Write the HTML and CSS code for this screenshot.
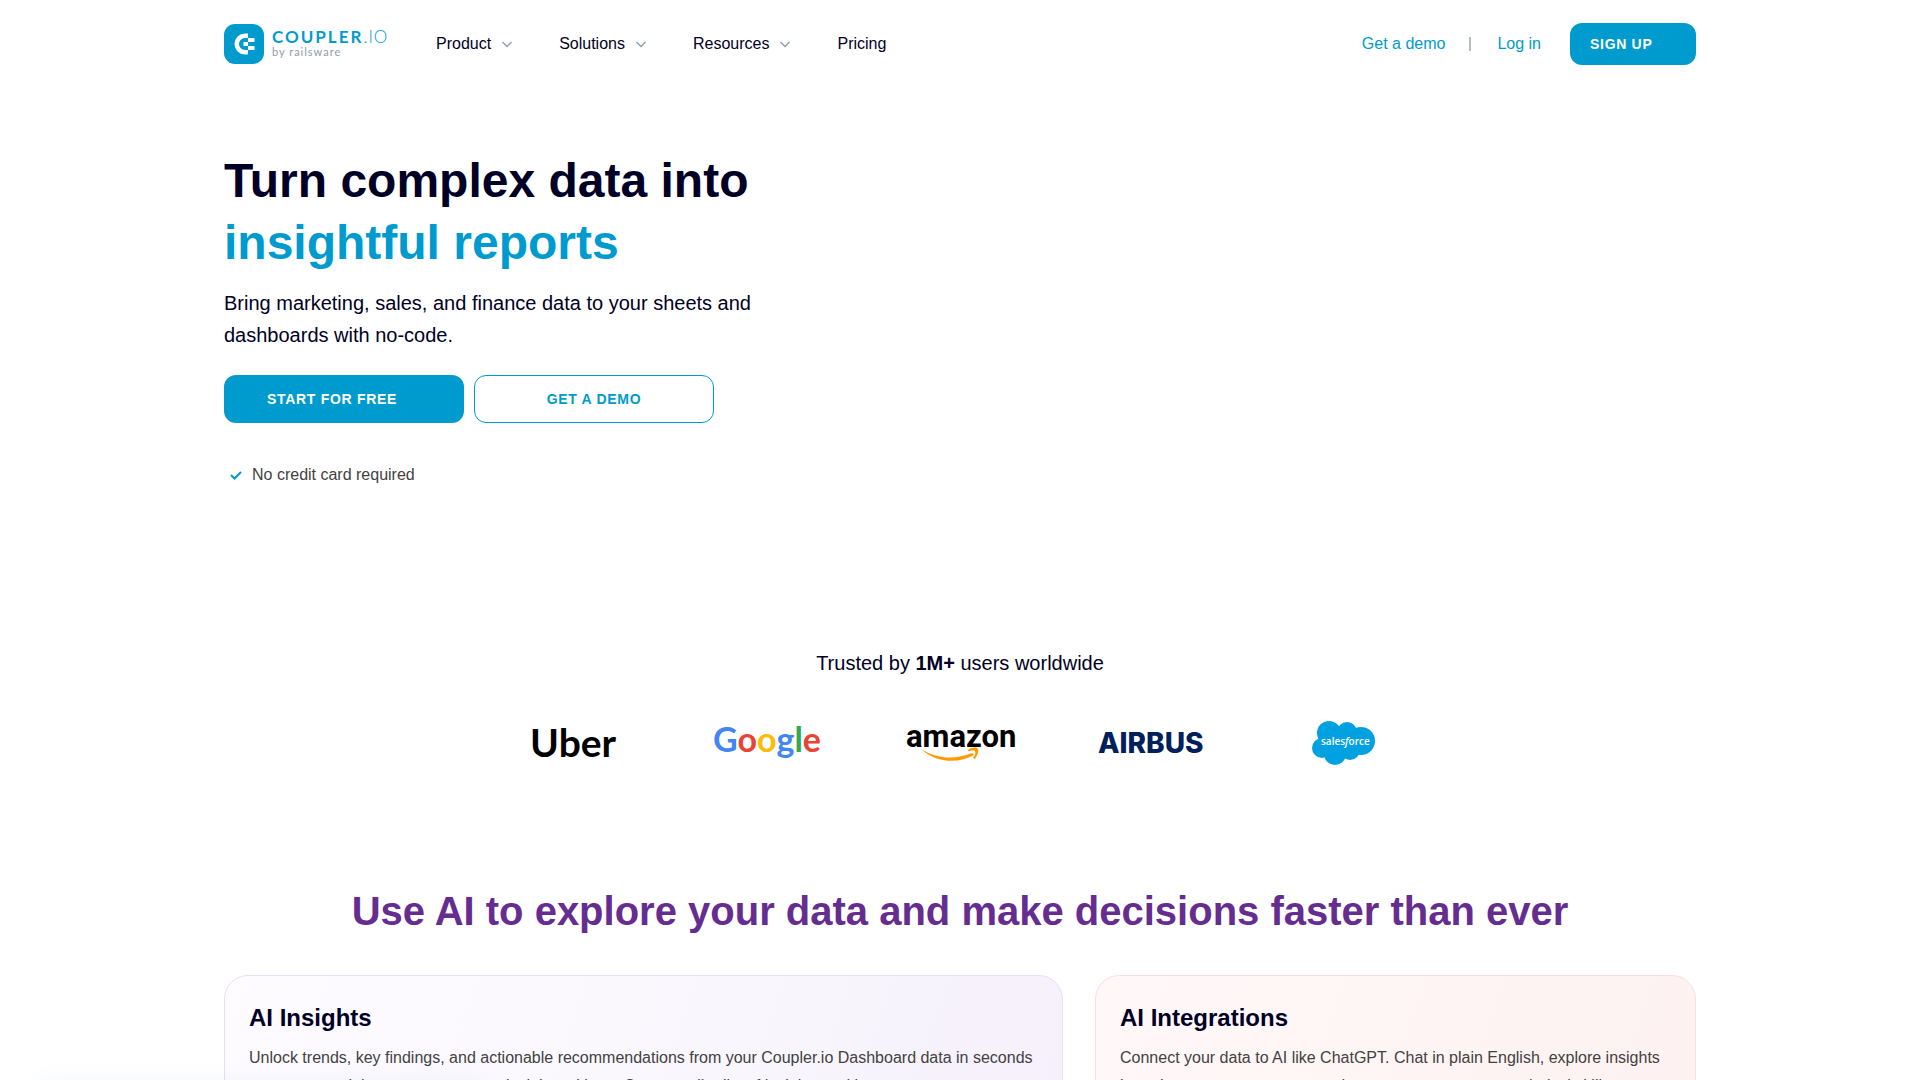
FILE: index.html
```html
<!DOCTYPE html>
<html lang="en">
<head>
  <meta charset="UTF-8">
  <meta name="viewport" content="width=device-width, initial-scale=1">
  <title>Coupler.io</title>
  <link rel="stylesheet" href="styles.css">
</head>
<body>

  <header class="header container">
    <a href="#" class="logo">
      <svg class="logo-icon" viewBox="0 0 40 40" aria-hidden="true">
        <rect width="40" height="40" rx="11" fill="#009bce"/>
        <path d="M24 9.500h-3a10.500 10.500 0 0 0 0 21h3v-4.500h-3a6 6 0 0 1 0-12h3z" fill="#fff"/>
        <path d="M24 14h6.500v4H24zM24 22h6.500v4H24zM24 18v4h-4.500v-4z" fill="#fff"/>
      </svg>
      <span class="logo-text">
        <span class="logo-name">COUPLER<span class="logo-light">.IO</span></span>
        <span class="logo-by">by railsware</span>
      </span>
    </a>

    <nav class="nav">
      <a href="#">Product
        <svg class="chevron" viewBox="0 0 12 12"><path d="M1.500 4l4.500 4.500L10.500 4"/></svg>
      </a>
      <a href="#">Solutions
        <svg class="chevron" viewBox="0 0 12 12"><path d="M1.500 4l4.500 4.500L10.500 4"/></svg>
      </a>
      <a href="#">Resources
        <svg class="chevron" viewBox="0 0 12 12"><path d="M1.500 4l4.500 4.500L10.500 4"/></svg>
      </a>
      <a href="#">Pricing</a>
    </nav>

    <div class="account">
      <a href="#">Get a demo</a>
      <span class="divider"></span>
      <a href="#">Log in</a>
      <a href="#" class="btn btn-signup">Sign up</a>
    </div>
  </header>

  <main>
    <section class="hero container">
      <h1>Turn complex data into<br><span class="accent">insightful reports</span></h1>
      <p class="lead">Bring marketing, sales, and finance data to your sheets and<br>dashboards with no-code.</p>
      <div class="hero-buttons">
        <a href="#" class="btn btn-start">Start for free</a>
        <a href="#" class="btn btn-demo">Get a demo</a>
      </div>
      <p class="note">
        <svg class="check" viewBox="0 0 12 12"><path d="M1 6l3.500 3.500L11 3"/></svg>
        No credit card required
      </p>
    </section>

    <section class="trusted">
      <p class="trusted-title">Trusted by <b>1M+</b> users worldwide</p>
      <ul class="brands">
        <li>
          <svg class="brand" viewBox="0 0 108 48">
            <text class="uber" x="8" y="38">Uber</text>
          </svg>
        </li>
        <li>
          <svg class="brand" viewBox="0 0 108 48">
            <text class="google" x="-1" y="33"><tspan fill="#4285f4">G</tspan><tspan fill="#ea4335">o</tspan><tspan fill="#fbbc05">o</tspan><tspan fill="#4285f4">g</tspan><tspan fill="#34a853">l</tspan><tspan fill="#ea4335">e</tspan></text>
          </svg>
        </li>
        <li>
          <svg class="brand" viewBox="0 0 108 48">
            <text class="amazon" x="0" y="28">amazon</text>
            <path d="M15 30c16 10 34 11 51 4l2 2c-16 9-38 8-53-6z" fill="#ff9900"/>
            <path d="M62 31c4-3 8-3 10-1 1 3-1 7-3 10l-2-1c2-3 3-5 2-7-2-1-4 0-7 0z" fill="#ff9900"/>
          </svg>
        </li>
        <li>
          <svg class="brand" viewBox="0 0 108 48">
            <text class="airbus" x="0" y="34">AIRBUS</text>
          </svg>
        </li>
        <li>
          <svg class="brand" viewBox="0 0 108 48">
            <g fill="#00a1e0">
              <circle cx="39" cy="14" r="12"/>
              <circle cx="57" cy="13" r="10"/>
              <circle cx="71" cy="22" r="14"/>
              <circle cx="32" cy="29" r="10"/>
              <circle cx="45" cy="35" r="11"/>
              <circle cx="60" cy="31" r="10"/>
              <path d="M30 16h40v15H36z"/>
            </g>
            <text class="salesforce" x="31" y="26">sales<tspan font-style="italic">f</tspan>orce</text>
          </svg>
        </li>
      </ul>
    </section>

    <section class="ai container">
      <h2>Use AI to explore your data and make decisions faster than ever</h2>
      <div class="cards">
        <article class="card card-insights">
          <h3>AI Insights</h3>
          <p>Unlock trends, key findings, and actionable recommendations from your Coupler.io Dashboard data in seconds or spot more right away across new insights with us. Get a smaller list of insights and key patterns as you go.</p>
        </article>
        <article class="card card-integrations">
          <h3>AI Integrations</h3>
          <p>Connect your data to AI like ChatGPT. Chat in plain English, explore insights based on your own reports, and get more answers, no technical skills required.</p>
        </article>
      </div>
    </section>
  </main>

  <div class="bottom-bar"></div>

</body>
</html>
```
FILE: styles.css
```css
* {
  box-sizing: border-box;
}

html {
  overflow: hidden;
}

body {
  height: 100vh;
  margin: 0;
  overflow: hidden;
  font-family: "Liberation Sans", Arial, sans-serif;
  font-size: 16px;
  color: #000026;
  background: #fff;
}

h1, h2, h3, p, ul {
  margin: 0;
}

a {
  color: inherit;
  text-decoration: none;
}

.container {
  max-width: 1520px;
  margin: 0 auto;
  padding: 0 24px;
}

/* header */
.header {
  display: flex;
  align-items: center;
  height: 88px;
}

.logo {
  display: flex;
  align-items: center;
  gap: 8px;
  width: 212px;
}

.logo-icon {
  width: 40px;
  height: 40px;
}

.logo-text {
  display: flex;
  flex-direction: column;
  padding-bottom: 2px;
  font-family: Lato, sans-serif;
  white-space: nowrap;
}

.logo-name {
  font-size: 17px;
  line-height: 18px;
  font-weight: 700;
  letter-spacing: 2px;
  color: #009bce;
}

.logo-light {
  font-weight: 300;
  letter-spacing: 1px;
}

.logo-by {
  font-size: 11px;
  line-height: 12px;
  letter-spacing: 1px;
  color: #8aa0ab;
}

.nav {
  display: flex;
  gap: 46px;
}

.nav a {
  display: flex;
  align-items: center;
  gap: 10px;
}

.chevron {
  width: 12px;
  height: 12px;
  fill: none;
  stroke: #8ba2ad;
  stroke-width: 1.5;
}

.account {
  display: flex;
  align-items: center;
  margin-left: auto;
  color: #009bce;
}

.divider {
  width: 2px;
  height: 14px;
  margin: 0 26px 0 24px;
  background: #b0bec5;
}

.btn {
  display: flex;
  align-items: center;
  justify-content: center;
  border-radius: 12px;
  font-size: 14px;
  font-weight: 700;
  letter-spacing: 0.05em;
  text-transform: uppercase;
}

.btn-signup {
  justify-content: flex-start;
  width: 126px;
  height: 42px;
  margin-left: 29px;
  padding-left: 20px;
  color: #fff;
  background: #009bce;
}

/* hero */
.hero {
  padding-top: 62px;
}

h1 {
  font-size: 48px;
  line-height: 62px;
}

.accent {
  color: #009bce;
}

.lead {
  margin-top: 13px;
  font-size: 20px;
  line-height: 32px;
}

.hero-buttons {
  display: flex;
  gap: 10px;
  margin-top: 24px;
}

.btn-start,
.btn-demo {
  width: 240px;
  height: 48px;
}

.btn-start {
  padding-right: 24px;
  color: #fff;
  background: #009bce;
}

.btn-demo {
  border: 1px solid #009bce;
  color: #009bce;
}

.note {
  display: flex;
  align-items: center;
  gap: 10px;
  margin-top: 40px;
  padding-left: 6px;
  line-height: 24px;
  color: #424242;
}

.check {
  width: 12px;
  height: 12px;
  fill: none;
  stroke: #009bce;
  stroke-width: 2;
}

/* trusted by */
.trusted {
  margin-top: 160px;
  text-align: center;
}

.trusted-title {
  font-size: 20px;
  line-height: 32px;
}

.brands {
  display: flex;
  justify-content: center;
  margin-top: 40px;
  padding: 0;
  list-style: none;
}

.brands li {
  display: flex;
  justify-content: center;
  width: 192px;
}

.brand {
  width: 108px;
  height: 48px;
  overflow: visible;
}

.uber {
  font-family: Lato, sans-serif;
  font-size: 39px;
  font-weight: 700;
  fill: #000;
}

.google {
  font-family: Lato, sans-serif;
  font-size: 34px;
  font-weight: 700;
}

.amazon {
  font-family: Roboto, sans-serif;
  font-size: 31px;
  font-weight: 700;
  fill: #000;
}

.airbus {
  font-family: Inter, sans-serif;
  font-size: 28px;
  font-weight: 800;
  fill: #00205b;
}

.salesforce {
  font-family: "Open Sans", sans-serif;
  font-size: 10px;
  font-weight: 600;
  fill: #fff;
}

/* ai cards */
.ai {
  margin-top: 116px;
}

h2 {
  font-size: 40px;
  line-height: 56px;
  text-align: center;
  color: #662d91;
}

.cards {
  display: grid;
  grid-template-columns: 839fr 601fr;
  gap: 32px;
  margin-top: 36px;
}

.card {
  min-height: 480px;
  padding: 24px;
  border: 1px solid #eadff5;
  border-radius: 24px;
}

.card h3 {
  font-size: 24px;
  line-height: 36px;
}

.card p {
  margin-top: 8px;
  line-height: 28px;
  color: #424242;
}

.card-insights {
  background: linear-gradient(110deg, #fefcff, #f8f5fc 60%, #f4edfb);
}

.card-integrations {
  border-color: #fbdfdc;
  background: linear-gradient(110deg, #fff8f8, #fef3f3 60%, #fdf0f0);
}

/* shadow of the bar that waits under the window edge */
.bottom-bar {
  position: fixed;
  top: 100%;
  left: 40px;
  width: 440px;
  height: 80px;
  box-shadow: 0 0 20px rgba(0, 120, 200, 0.06);
}
```
